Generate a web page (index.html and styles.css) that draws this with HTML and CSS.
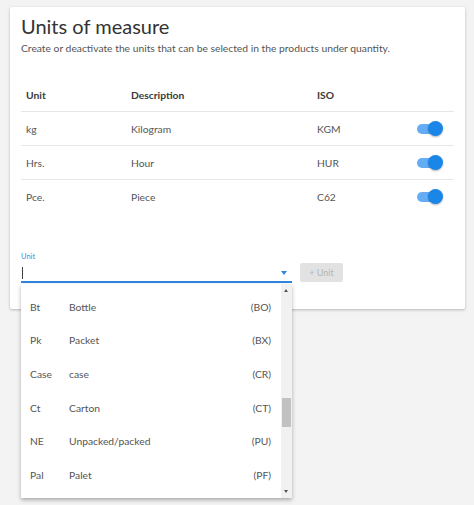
FILE: index.html
```html
<!DOCTYPE html>
<html>
<head>
<meta charset="utf-8">
<link rel="stylesheet" href="styles.css">
</head>
<body>
<div class="card">
  <h1 class="title">Units of measure</h1>
  <p class="intro">Create or deactivate the units that can be selected in the products under quantity.</p>
  <div class="table">
    <div class="row head">
      <div class="c1">Unit</div><div class="c2">Description</div><div class="c3">ISO</div><div class="c4"></div>
    </div>
    <div class="row">
      <div class="c1">kg</div><div class="c2">Kilogram</div><div class="c3">KGM</div><div class="c4"><span class="toggle"><span class="knob"></span></span></div>
    </div>
    <div class="row">
      <div class="c1">Hrs.</div><div class="c2">Hour</div><div class="c3">HUR</div><div class="c4"><span class="toggle"><span class="knob"></span></span></div>
    </div>
    <div class="row last">
      <div class="c1">Pce.</div><div class="c2">Piece</div><div class="c3">C62</div><div class="c4"><span class="toggle"><span class="knob"></span></span></div>
    </div>
  </div>
  <div class="addrow">
    <div class="field">
      <label class="label">Unit</label>
      <div class="input"><span class="caret"></span><span class="arrow"></span></div>
      <div class="menu">
        <div class="items">
          <div class="item"><span class="code">Bt</span><span class="desc">Bottle</span><span class="iso">(BO)</span></div>
          <div class="item"><span class="code">Pk</span><span class="desc">Packet</span><span class="iso">(BX)</span></div>
          <div class="item"><span class="code">Case</span><span class="desc">case</span><span class="iso">(CR)</span></div>
          <div class="item"><span class="code">Ct</span><span class="desc">Carton</span><span class="iso">(CT)</span></div>
          <div class="item"><span class="code">NE</span><span class="desc">Unpacked/packed</span><span class="iso">(PU)</span></div>
          <div class="item"><span class="code">Pal</span><span class="desc">Palet</span><span class="iso">(PF)</span></div>
        </div>
        <div class="scrollbar">
          <span class="up"></span>
          <span class="thumb"></span>
          <span class="down"></span>
        </div>
      </div>
    </div>
    <button class="btn">+ Unit</button>
  </div>
</div>
</body>
</html>
```

FILE: styles.css
```css
* { box-sizing: border-box; }
html, body { margin: 0; }
body {
  background: #f3f3f3;
  padding: 7px 9px 0 10px;
  font-family: Lato, "Noto Sans", sans-serif;
  color: #555;
  height: 505px;
}
.card {
  width: 455px;
  height: 302px;
  background: #fff;
  box-shadow: 0 1px 3px rgba(0,0,0,0.25);
  border-radius: 2px;
  padding: 7px 11px 0 11px;
}
.title {
  margin: 0;
  font-size: 20px;
  font-weight: 400;
  color: #333;
  line-height: 24px;
}
.intro {
  margin: 3px 0 0;
  font-size: 10.3px;
  line-height: 14px;
  color: #555;
}
.table { margin-top: 23px; }
.row {
  display: flex;
  align-items: center;
  height: 34px;
  border-bottom: 1px solid #e6e6e6;
  font-size: 10.3px;
  color: #555;
}
.row.head { height: 34px; color: #3a3a3a; font-weight: 700; }
.row.last { border-bottom: none; }
.c1 { width: 110px; padding-left: 5px; }
.c2 { width: 186px; }
.c3 { width: 100px; }
.c4 { flex: 1; display: flex; }
.toggle {
  position: relative;
  width: 23px;
  height: 10px;
  border-radius: 5px;
  background: #64adf5;
}
.knob {
  position: absolute;
  right: -3px;
  top: -3px;
  width: 15px;
  height: 15px;
  border-radius: 50%;
  background: #1a86e8;
  box-shadow: 0 1px 2px rgba(0,0,0,0.3);
}
.addrow {
  margin-top: 38px;
  display: flex;
  align-items: flex-end;
  gap: 8px;
}
.field { position: relative; width: 271px; }
.label {
  display: block;
  font-size: 7.5px;
  color: #3b8fe0;
  line-height: 10px;
}
.input {
  position: relative;
  height: 21px;
  border-bottom: 2px solid #2f86de;
}
.caret {
  position: absolute;
  left: 1px;
  top: 5px;
  width: 1px;
  height: 12px;
  background: #444;
}
.arrow {
  position: absolute;
  right: 5px;
  top: 9px;
  width: 0;
  height: 0;
  border-left: 3.5px solid transparent;
  border-right: 3.5px solid transparent;
  border-top: 4px solid #2f86de;
}
.btn {
  width: 43px;
  height: 19px;
  margin-bottom: 1px;
  border: none;
  border-radius: 2px;
  background: #e2e2e2;
  color: #b5b5b5;
  font-family: Lato, "Noto Sans", sans-serif;
  font-size: 9px;
  padding: 0;
}
.menu {
  position: absolute;
  left: 0;
  top: 32px;
  width: 271px;
  height: 214px;
  background: #fff;
  box-shadow: 0 2px 4px rgba(0,0,0,0.3);
  display: flex;
  z-index: 2;
}
.items { flex: 1; padding-top: 6px; }
.item {
  display: flex;
  align-items: center;
  height: 33.6px;
  padding: 0 10px 0 9px;
  font-size: 10.3px;
  color: #555;
}
.code { width: 39px; }
.desc { flex: 1; }
.scrollbar {
  position: relative;
  width: 11px;
  background: #f1f1f1;
}
.up, .down {
  position: absolute;
  left: 3px;
  width: 0; height: 0;
  border-left: 2.5px solid transparent;
  border-right: 2.5px solid transparent;
}
.up { top: 5px; border-bottom: 3px solid #555; }
.down { bottom: 5px; border-top: 3px solid #555; }
.thumb {
  position: absolute;
  left: 1px;
  top: 114px;
  width: 9px;
  height: 29px;
  background: #c1c1c1;
}
```
